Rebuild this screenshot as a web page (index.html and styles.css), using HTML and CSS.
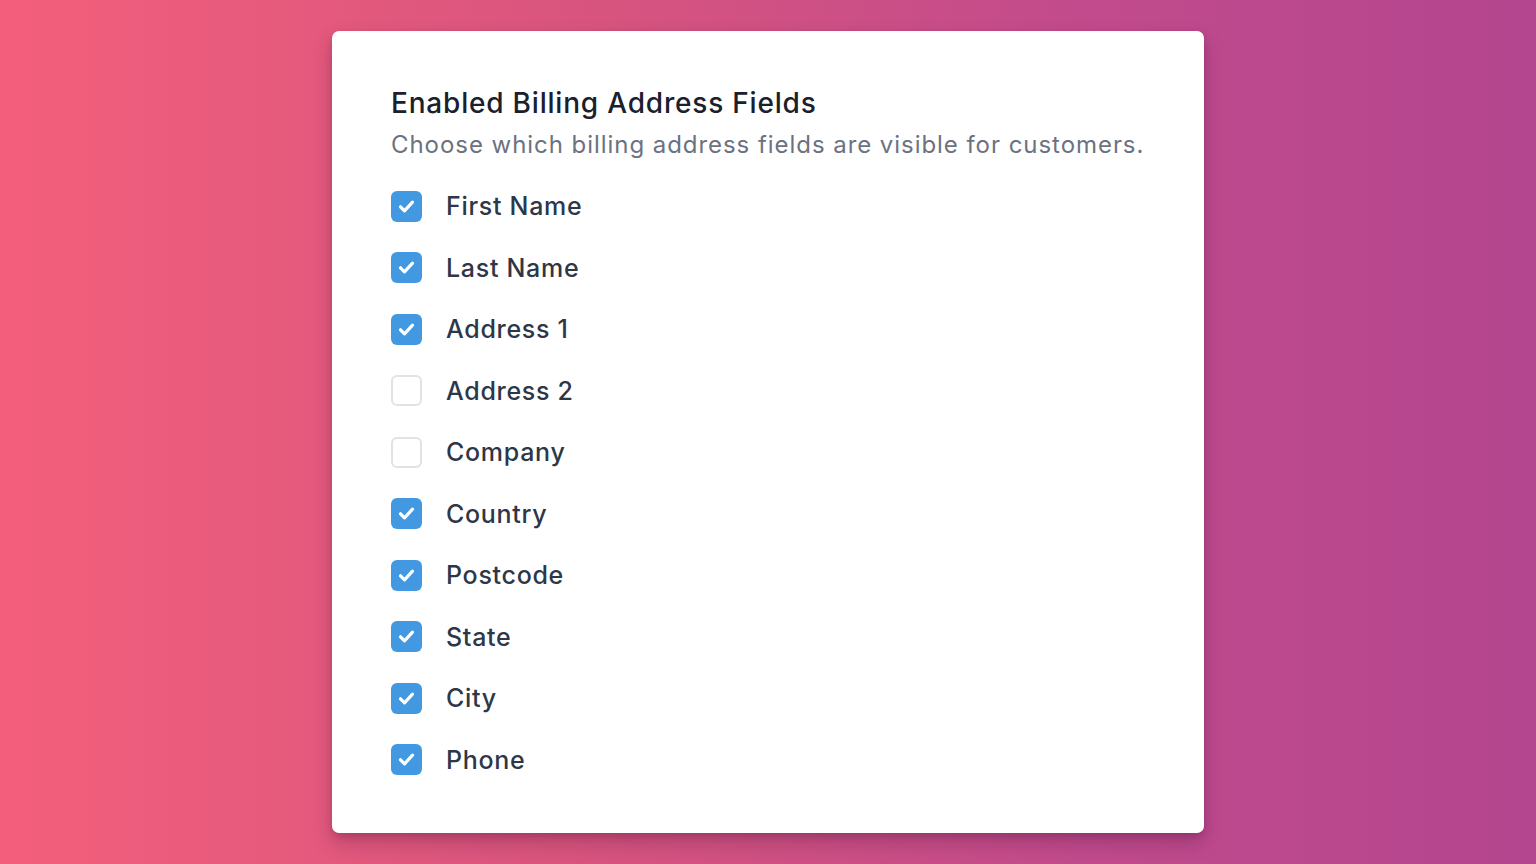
FILE: index.html
```html
<!DOCTYPE html>
<html lang="en">
<head>
<meta charset="utf-8">
<title>Billing Address Fields</title>
<link rel="stylesheet" href="styles.css">
</head>
<body>
<main class="stage">
  <section class="card">
    <h1 class="title">Enabled Billing Address Fields</h1>
    <p class="subtitle">Choose which billing address fields are visible for customers.</p>
    <ul class="fields">
      <li class="field"><span class="box checked"><svg viewBox="0 0 31 31"><path d="M9.5 15.8l4 4 8-8.6"/></svg></span><span class="label">First Name</span></li>
      <li class="field"><span class="box checked"><svg viewBox="0 0 31 31"><path d="M9.5 15.8l4 4 8-8.6"/></svg></span><span class="label">Last Name</span></li>
      <li class="field"><span class="box checked"><svg viewBox="0 0 31 31"><path d="M9.5 15.8l4 4 8-8.6"/></svg></span><span class="label">Address 1</span></li>
      <li class="field"><span class="box"></span><span class="label">Address 2</span></li>
      <li class="field"><span class="box"></span><span class="label">Company</span></li>
      <li class="field"><span class="box checked"><svg viewBox="0 0 31 31"><path d="M9.5 15.8l4 4 8-8.6"/></svg></span><span class="label">Country</span></li>
      <li class="field"><span class="box checked"><svg viewBox="0 0 31 31"><path d="M9.5 15.8l4 4 8-8.6"/></svg></span><span class="label">Postcode</span></li>
      <li class="field"><span class="box checked"><svg viewBox="0 0 31 31"><path d="M9.5 15.8l4 4 8-8.6"/></svg></span><span class="label">State</span></li>
      <li class="field"><span class="box checked"><svg viewBox="0 0 31 31"><path d="M9.5 15.8l4 4 8-8.6"/></svg></span><span class="label">City</span></li>
      <li class="field"><span class="box checked"><svg viewBox="0 0 31 31"><path d="M9.5 15.8l4 4 8-8.6"/></svg></span><span class="label">Phone</span></li>
    </ul>
  </section>
</main>
</body>
</html>
```

FILE: styles.css
```css
* { box-sizing: border-box; }
html, body { margin: 0; padding: 0; }
body {
  width: 1536px;
  height: 864px;
  overflow: hidden;
  font-family: Inter, "Noto Sans", "Liberation Sans", sans-serif;
  background: linear-gradient(90deg, #f35f7b 0%, #d7547f 40%, #c24b8c 70%, #b3468f 100%);
}
.stage {
  display: flex;
  justify-content: center;
  padding-top: 31px;
}
.card {
  width: 872px;
  height: 802px;
  background: #fff;
  border-radius: 7px;
  padding: 52px 59px 53px 59px;
  box-shadow: 0 10px 20px rgba(60, 10, 50, 0.25), 0 3px 6px rgba(60, 10, 50, 0.15);
}
.title {
  margin: 0;
  font-size: 28px;
  line-height: 40px;
  font-weight: 500;
  color: #1a202c;
  letter-spacing: 0.8px;
}
.subtitle {
  margin: 4px 0 0;
  font-size: 24px;
  line-height: 36px;
  font-weight: 400;
  color: #6b7280;
  letter-spacing: 0.95px;
}
.fields {
  list-style: none;
  margin: 23px 0 0;
  padding: 0;
  display: flex;
  flex-direction: column;
  gap: 21.5px;
}
.field {
  display: flex;
  align-items: center;
  height: 40px;
  gap: 24px;
}
.box {
  width: 31px;
  height: 31px;
  border-radius: 6px;
  border: 2px solid #dfe3e8;
  background: #fff;
  flex: none;
  display: flex;
}
.box.checked {
  border: none;
  background: #4299e1;
}
.box svg {
  width: 31px;
  height: 31px;
}
.box path {
  fill: none;
  stroke: #fff;
  stroke-width: 3.2;
  stroke-linecap: round;
  stroke-linejoin: round;
}
.label {
  font-size: 25px;
  line-height: 36px;
  font-weight: 500;
  color: #2d3748;
  letter-spacing: 0.7px;
}
```
